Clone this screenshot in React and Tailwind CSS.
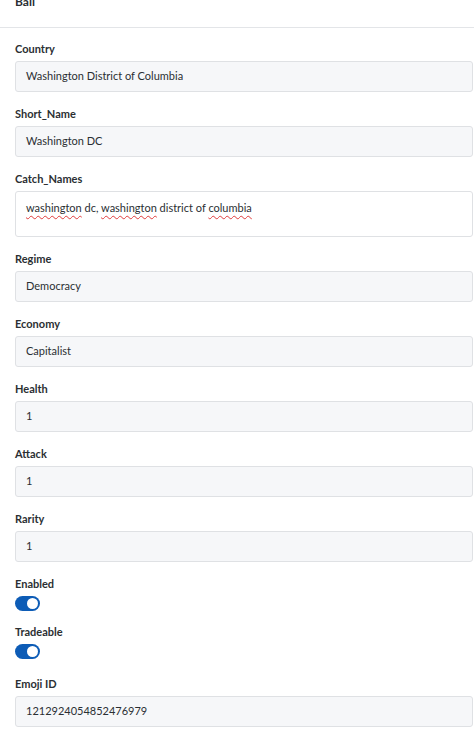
import React from "react";

const font = { fontFamily: "Lato, 'Noto Sans', sans-serif" };

function Label({ children }) {
  return (
    <div className="text-[11px] font-bold leading-[17px] text-[#2b2f33] mb-[4px]">
      {children}
    </div>
  );
}

function Input({ value, mb = "mb-[13px]" }) {
  return (
    <div className={"h-[31px] w-[458px] flex items-center pl-[10px] bg-[#f6f7f9] border border-[#dfe1e4] rounded-[3px] text-[11px] text-[#2b2f33] " + mb}>
      {value}
    </div>
  );
}

function Spell({ children }) {
  return (
    <span className="underline decoration-wavy decoration-[#e03c3c] decoration-[1px] underline-offset-[3px]">
      {children}
    </span>
  );
}

function Toggle({ extra }) {
  return (
    <div className={"w-[25px] h-[15px] rounded-full bg-[#0d5cb6] relative mt-[1px] " + extra}>
      <div className="absolute right-[2px] top-[2px] w-[11px] h-[11px] rounded-full bg-white" />
    </div>
  );
}

export default function App() {
  return (
    <div className="w-[474px] h-[732px] bg-white overflow-hidden" style={font}>
      <div className="h-[28px] border-b border-[#e3e5e8] px-[15px] overflow-hidden">
        <div className="text-[12px] font-bold leading-[16px] text-[#2b2f33] -mt-[6px]">Ball</div>
      </div>
      <div className="pl-[15px] pt-[12px]">
        <Label>Country</Label>
        <Input value="Washington District of Columbia" />
        <Label>Short_Name</Label>
        <Input value="Washington DC" />
        <Label>Catch_Names</Label>
        <div className="h-[46px] w-[458px] pl-[10px] pt-[8px] bg-white border border-[#dfe1e4] rounded-[3px] text-[11px] text-[#2b2f33] mb-[13px]">
          <Spell>washington</Spell> dc, <Spell>washington</Spell> district of <Spell>columbia</Spell>
        </div>
        <Label>Regime</Label>
        <Input value="Democracy" />
        <Label>Economy</Label>
        <Input value="Capitalist" />
        <Label>Health</Label>
        <Input value="1" />
        <Label>Attack</Label>
        <Input value="1" />
        <Label>Rarity</Label>
        <Input value="1" />
        <Label>Enabled</Label>
        <Toggle extra="mb-[12px]" />
        <Label>Tradeable</Label>
        <Toggle extra="mb-[16px]" />
        <Label>Emoji ID</Label>
        <Input value="1212924054852476979" />
      </div>
    </div>
  );
}
